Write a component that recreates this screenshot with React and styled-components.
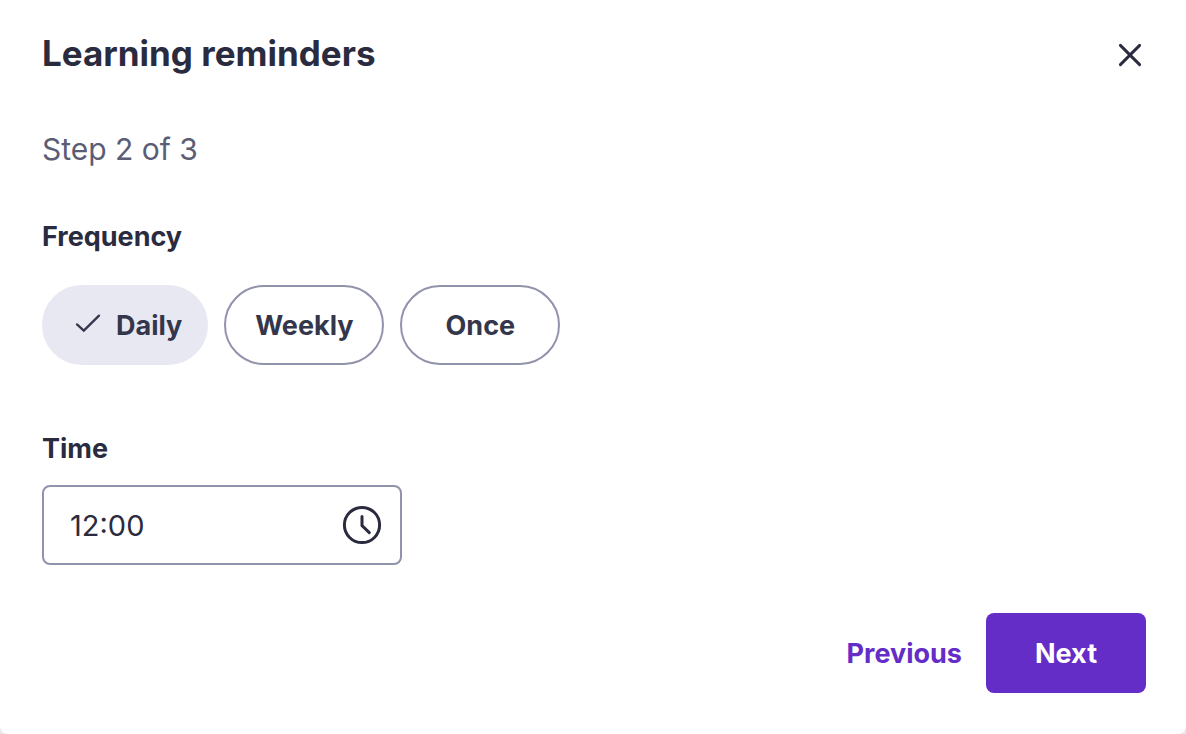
import { useState } from "react"
import styled, { createGlobalStyle } from "styled-components"

const frequencies = ["Daily", "Weekly", "Once"]

const App = () => {
  const [frequency, setFrequency] = useState("Daily")
  const [time, setTime] = useState("12:00")

  return (
    <>
      <GlobalStyle />
      <Dialog role="dialog" aria-labelledby="dialog-title">
        <Header>
          <Title id="dialog-title">Learning reminders</Title>
          <CloseButton type="button" aria-label="Close">
            <svg width="32" height="32" viewBox="0 0 32 32" fill="none" stroke="currentColor" strokeWidth="2.9" strokeLinecap="round">
              <path d="M6.4 6.4 25.6 25.6M25.6 6.4 6.4 25.6" />
            </svg>
          </CloseButton>
        </Header>

        <Step>Step 2 of 3</Step>

        <Label as="h2" id="frequency-label">Frequency</Label>
        <Chips role="group" aria-labelledby="frequency-label">
          {frequencies.map(name => (
            <Chip
              key={name}
              type="button"
              $selected={name === frequency}
              aria-pressed={name === frequency}
              onClick={() => setFrequency(name)}
            >
              {name === frequency && (
                <svg width="28" height="28" viewBox="0 0 28 28" fill="none" stroke="currentColor" strokeWidth="2.3" strokeLinecap="round">
                  <path d="M3 13.4 9.8 19.6 25 4.6" />
                </svg>
              )}
              {name}
            </Chip>
          ))}
        </Chips>

        <Label htmlFor="time">Time</Label>
        <TimeField>
          <TimeInput id="time" type="text" value={time} onChange={e => setTime(e.target.value)} />
          <svg width="40" height="40" viewBox="0 0 40 40" fill="none" stroke="currentColor" strokeWidth="3">
            <circle cx="20" cy="20" r="17.6" />
            <path d="M20 11.5V20.5L27.3 27.6" strokeLinecap="round" />
          </svg>
        </TimeField>

        <Footer>
          <PreviousButton type="button">Previous</PreviousButton>
          <NextButton type="button">Next</NextButton>
        </Footer>
      </Dialog>
    </>
  )
}


const GlobalStyle = createGlobalStyle`
  * {
    box-sizing: border-box;
  }

  body {
    margin: 0;
    background-color: #e8e8ee;
    color: #2a2b3f;
    font-family: Inter, "Liberation Sans", sans-serif;
  }

  button, input {
    font-family: inherit;
  }
`

const Dialog = styled.main`
  display: flex;
  flex-direction: column;
  min-height: 100vh;
  padding: 31px 40px 41px 42px;
  background-color: #fff;
  border-radius: 0 0 8px 8px;
`

const Header = styled.header`
  display: flex;
  align-items: flex-start;
  justify-content: space-between;
`

const Title = styled.h1`
  margin: 0;
  font-size: 35px;
  line-height: 44px;
  font-weight: 700;
`

const CloseButton = styled.button`
  display: flex;
  padding: 8px 0 0;
  border: none;
  background: none;
  color: inherit;
  cursor: pointer;
`

const Step = styled.p`
  margin: 54px 0 48px;
  font-size: 30px;
  line-height: 40px;
  color: #5b5d75;
`

const Label = styled.label`
  margin: 0;
  font-size: 27px;
  line-height: 40px;
  font-weight: 700;
`


/////////////////////
//    Frequency

const Chips = styled.div`
  display: flex;
  flex-wrap: wrap;
  gap: 16px;
  margin: 28px 0 64px;
`

const Chip = styled.button`
  display: flex;
  align-items: center;
  justify-content: center;
  gap: 14px;
  min-width: 160px;
  height: 80px;
  padding: 0 ${p => p.$selected ? '24px 0 30px' : '24px'};
  border: 2px solid ${p => p.$selected ? '#e8e8f3' : '#9192ab'};
  border-radius: 40px;
  background-color: ${p => p.$selected ? '#e8e8f3' : '#fff'};
  color: #34374b;
  font-size: 27px;
  font-weight: 700;
  cursor: pointer;
`


/////////////////////
//    Time

const TimeField = styled.div`
  display: flex;
  align-items: center;
  width: 360px;
  max-width: 100%;
  height: 80px;
  margin-top: 16px;
  padding: 0 18px 0 26px;
  border: 2px solid #9192ab;
  border-radius: 8px;
`

const TimeInput = styled.input`
  flex: 1;
  min-width: 0;
  padding: 0;
  border: none;
  outline: none;
  background: none;
  color: inherit;
  font-size: 29px;
`


/////////////////////
//    Footer

const Footer = styled.footer`
  display: flex;
  justify-content: flex-end;
  gap: 24px;
  margin-top: 48px;
`

const PreviousButton = styled.button`
  height: 80px;
  padding: 0;
  border: none;
  background: none;
  color: #652dc7;
  font-size: 27px;
  font-weight: 700;
  cursor: pointer;
`

const NextButton = styled(PreviousButton)`
  min-width: 160px;
  border-radius: 8px;
  background-color: #652dc7;
  color: #fff;
`

export default App
